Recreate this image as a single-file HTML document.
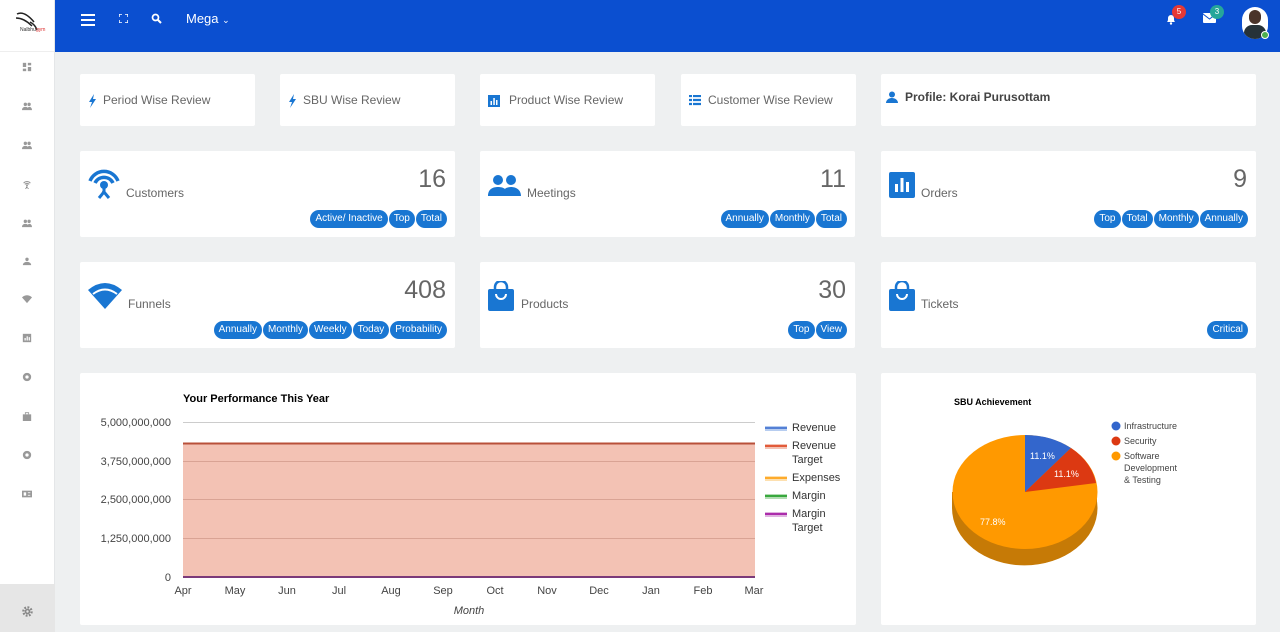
<!DOCTYPE html>
<html><head><meta charset="utf-8">
<style>
*{box-sizing:border-box;margin:0;padding:0}
body{width:1280px;height:632px;overflow:hidden;background:#eef0f1;font-family:"Liberation Sans",sans-serif;position:relative;color:#555}
.side{position:absolute;left:0;top:0;width:55px;height:632px;background:#fff;border-right:1px solid #e4e6e8}
.side .logo{height:52px;border-bottom:1px solid #eee}
.side .ic{position:absolute;left:22px;width:10px;height:10px}
.side .bot{position:absolute;left:0;bottom:0;width:55px;height:48px;background:#e6e6e6}
.top{position:absolute;left:55px;top:0;width:1225px;height:52px;background:#0b4fd0}
.card{position:absolute;background:#fff;border-radius:2px}
.rv{font-size:12px;color:#666;line-height:52px;padding-left:23px}
.rv svg{position:absolute;left:8px;top:20px}
.big{position:absolute;right:9px;top:14px;font-size:25px;color:#666}
.lbl{position:absolute;font-size:12px;color:#666}
.pills{position:absolute;right:8px;top:59px;display:flex;gap:1px}
.pill{background:#1976d2;color:#fff;font-size:10px;height:18px;line-height:18px;padding:0 5px;border-radius:9px}
.ic2{position:absolute}
</style></head><body>
<div class="side">
 <div class="logo">
  <svg width="55" height="52"><path d="M17 14c6-3 12 2 17 8M16 18c6 0 11 3 16 8M30 22c4 2 6 5 7 8" stroke="#222" stroke-width="1.5" fill="none"/><text x="20" y="31" font-size="5" fill="#333" font-family="Liberation Sans">Nalbhu</text><text x="36" y="31" font-size="5" fill="#d33" font-family="Liberation Sans">gym</text></svg>
 </div>
 <svg class="ic" style="top:62px" viewBox="0 0 12 12"><rect x="1" y="1" width="4" height="5" fill="#999"/><rect x="7" y="1" width="4" height="3" fill="#999"/><rect x="1" y="8" width="4" height="3" fill="#999"/><rect x="7" y="6" width="4" height="5" fill="#999"/></svg>
 <svg class="ic" style="top:101px" viewBox="0 0 12 12"><circle cx="4" cy="4" r="2" fill="#999"/><circle cx="8.5" cy="4" r="2" fill="#999"/><path d="M0 11c0-3 2-4 4-4s4 1 4 4zM6 11c0-3 2-4 3-4s3 1 3 4z" fill="#999"/></svg>
 <svg class="ic" style="top:140px" viewBox="0 0 12 12"><circle cx="4" cy="4" r="2" fill="#999"/><circle cx="8.5" cy="4" r="2" fill="#999"/><path d="M0 11c0-3 2-4 4-4s4 1 4 4zM6 11c0-3 2-4 3-4s3 1 3 4z" fill="#999"/></svg>
 <svg class="ic" style="top:179px" viewBox="0 0 12 12"><path d="M2 5a5 5 0 0 1 8 0M3.5 6.5a3 3 0 0 1 5 0" stroke="#999" fill="none" stroke-width="1.3"/><circle cx="6" cy="7.5" r="1.2" fill="#999"/><path d="M6 8v2l-2 2M6 10l2 2" stroke="#999" stroke-width="1"/></svg>
 <svg class="ic" style="top:218px" viewBox="0 0 12 12"><circle cx="4" cy="4" r="2" fill="#999"/><circle cx="8.5" cy="4" r="2" fill="#999"/><path d="M0 11c0-3 2-4 4-4s4 1 4 4zM6 11c0-3 2-4 3-4s3 1 3 4z" fill="#999"/></svg>
 <svg class="ic" style="top:256px" viewBox="0 0 12 12"><circle cx="6" cy="4" r="2" fill="#999"/><path d="M1 11c0-3 3-4 5-4s5 1 5 4z" fill="#999"/></svg>
 <svg class="ic" style="top:294px" viewBox="0 0 12 12"><path d="M0 4q6-5 12 0L6 11z" fill="#999"/></svg>
 <svg class="ic" style="top:333px" viewBox="0 0 12 12"><rect x="1" y="1" width="10" height="10" fill="#999"/><rect x="3" y="6" width="1.5" height="3" fill="#fff"/><rect x="5.5" y="4" width="1.5" height="5" fill="#fff"/><rect x="8" y="5" width="1.5" height="4" fill="#fff"/></svg>
 <svg class="ic" style="top:372px" viewBox="0 0 12 12"><circle cx="6" cy="6" r="5" fill="#999"/><circle cx="6" cy="6" r="2" fill="#fff"/></svg>
 <svg class="ic" style="top:411px" viewBox="0 0 12 12"><rect x="1" y="4" width="10" height="8" fill="#999"/><path d="M4 4V2h4v2" stroke="#999" fill="none"/></svg>
 <svg class="ic" style="top:450px" viewBox="0 0 12 12"><circle cx="6" cy="6" r="5" fill="#999"/><circle cx="6" cy="6" r="2" fill="#fff"/></svg>
 <svg class="ic" style="top:489px" viewBox="0 0 12 12"><rect x="0" y="2" width="12" height="8" fill="#999"/><rect x="2" y="4" width="3" height="4" fill="#fff"/><rect x="7" y="4" width="3" height="1" fill="#fff"/><rect x="7" y="7" width="3" height="1" fill="#fff"/></svg>
 <div class="bot"><svg style="position:absolute;left:22px;top:22px" width="11" height="11" viewBox="0 0 12 12"><circle cx="6" cy="6" r="4.5" fill="none" stroke="#888" stroke-width="2.5" stroke-dasharray="2 1.5"/><circle cx="6" cy="6" r="3" fill="#888"/><circle cx="6" cy="6" r="1.3" fill="#e6e6e6"/></svg></div>
</div>
<div class="top">
 <svg style="position:absolute;left:25px;top:13px" width="16" height="14"><path d="M1 2h14M1 7h14M1 12h14" stroke="#fff" stroke-width="2"/></svg>
 <svg style="position:absolute;left:64px;top:14px" width="9" height="9"><path d="M0 3V0h3M6 0h3v3M9 6v3H6M3 9H0V6" stroke="#fff" stroke-width="1.5" fill="none"/></svg>
 <svg style="position:absolute;left:96px;top:13px" width="11" height="11"><circle cx="4.5" cy="4.5" r="3" stroke="#fff" stroke-width="1.7" fill="none"/><path d="M7 7l3 3" stroke="#fff" stroke-width="2"/></svg>
 <div style="position:absolute;left:131px;top:11px;color:#fff;font-size:13px">Mega <span style="font-size:9px">&#8964;</span></div>
 <svg style="position:absolute;left:1110px;top:13px" width="12" height="12"><path d="M2 9c1-1 1-2 1-4a3 3 0 0 1 6 0c0 2 0 3 1 4z" fill="#fff"/><circle cx="6" cy="10.5" r="1.2" fill="#fff"/></svg>
 <div style="position:absolute;left:1117px;top:5px;width:14px;height:14px;border-radius:7px;background:#e53935;color:#fff;font-size:8px;text-align:center;line-height:14px">5</div>
 <svg style="position:absolute;left:1148px;top:13px" width="13" height="10"><rect x="0" y="0" width="13" height="10" rx="1" fill="#fff"/><path d="M0 1l6.5 5L13 1" stroke="#0b4fd0" fill="none"/></svg>
 <div style="position:absolute;left:1155px;top:5px;width:14px;height:14px;border-radius:7px;background:#26a69a;color:#fff;font-size:8px;text-align:center;line-height:14px">3</div>
 <div style="position:absolute;left:1187px;top:7px;width:26px;height:32px;border-radius:13px;background:#fff;overflow:hidden">
  <div style="position:absolute;left:7px;top:3px;width:12px;height:14px;border-radius:6px;background:#4a342a"></div>
  <div style="position:absolute;left:2px;top:18px;width:22px;height:16px;border-radius:8px 8px 0 0;background:#263238"></div>
 </div>
 <div style="position:absolute;left:1206px;top:31px;width:8px;height:8px;border-radius:4px;background:#4caf50;border:1.5px solid #fff"></div>
</div>

<div class="card rv" style="left:80px;top:74px;width:175px;height:52px"><svg width="8" height="14"><path d="M6 0L1 8h3l-2 6 6-9H5z" fill="#1976d2"/></svg>Period Wise Review</div>
<div class="card rv" style="left:280px;top:74px;width:175px;height:52px"><svg width="8" height="14"><path d="M6 0L1 8h3l-2 6 6-9H5z" fill="#1976d2"/></svg>SBU Wise Review</div>
<div class="card rv" style="left:480px;top:74px;width:175px;height:52px;padding-left:29px"><svg width="12" height="12" style="top:21px"><rect width="12" height="12" fill="#1976d2"/><rect x="2.5" y="6" width="1.5" height="4" fill="#fff"/><rect x="5.3" y="3" width="1.5" height="7" fill="#fff"/><rect x="8" y="5" width="1.5" height="5" fill="#fff"/></svg>Product Wise Review</div>
<div class="card rv" style="left:681px;top:74px;width:175px;height:52px;padding-left:27px"><svg width="12" height="11" style="top:21px"><path d="M0 1h3M4 1h8M0 5h3M4 5h8M0 9h3M4 9h8" stroke="#1976d2" stroke-width="2.3"/></svg>Customer Wise Review</div>
<div class="card" style="left:881px;top:74px;width:375px;height:52px"><svg style="position:absolute;left:5px;top:17px" width="12" height="12"><circle cx="6" cy="3.5" r="3" fill="#1976d2"/><path d="M0 12c0-3 3-5 6-5s6 2 6 5z" fill="#1976d2"/></svg><div style="position:absolute;left:24px;top:16px;font-size:12px;font-weight:bold;color:#444">Profile: Korai Purusottam</div></div>

<!-- row 2 -->
<div class="card" style="left:80px;top:151px;width:375px;height:86px">
 <svg class="ic2" style="left:7px;top:17px" width="34" height="32"><path d="M3 13a15 15 0 0 1 28 0M8 15a10 10 0 0 1 18 0" stroke="#1976d2" stroke-width="3.5" fill="none"/><circle cx="17" cy="17" r="4" fill="#1976d2"/><path d="M17 20v4l-5 6M17 24l5 6" stroke="#1976d2" stroke-width="3"/></svg>
 <div class="lbl" style="left:46px;top:35px">Customers</div><div class="big">16</div>
 <div class="pills"><span class="pill">Active/ Inactive</span><span class="pill">Top</span><span class="pill">Total</span></div>
</div>
<div class="card" style="left:480px;top:151px;width:375px;height:86px">
 <svg class="ic2" style="left:8px;top:23px" width="33" height="22"><circle cx="10" cy="6" r="5" fill="#1976d2"/><circle cx="23" cy="6" r="5" fill="#1976d2"/><path d="M0 22c0-7 5-9 10-9s10 2 10 9zM14 22c0-7 5-9 9-9s10 2 10 9z" fill="#1976d2"/></svg>
 <div class="lbl" style="left:47px;top:35px">Meetings</div><div class="big">11</div>
 <div class="pills"><span class="pill">Annually</span><span class="pill">Monthly</span><span class="pill">Total</span></div>
</div>
<div class="card" style="left:881px;top:151px;width:375px;height:86px">
 <svg class="ic2" style="left:8px;top:21px" width="26" height="26"><rect width="26" height="26" rx="2" fill="#1976d2"/><rect x="6" y="12" width="3" height="8" fill="#fff"/><rect x="11.5" y="6" width="3" height="14" fill="#fff"/><rect x="17" y="10" width="3" height="10" fill="#fff"/></svg>
 <div class="lbl" style="left:40px;top:35px">Orders</div><div class="big">9</div>
 <div class="pills"><span class="pill">Top</span><span class="pill">Total</span><span class="pill">Monthly</span><span class="pill">Annually</span></div>
</div>

<!-- row 3 -->
<div class="card" style="left:80px;top:262px;width:375px;height:86px">
 <svg class="ic2" style="left:8px;top:20px" width="34" height="27"><path d="M0 8q17-14 34 0L17 27z" fill="#1976d2"/><path d="M5 12q12-9 24 0" stroke="#fff" stroke-width="2" fill="none"/></svg>
 <div class="lbl" style="left:48px;top:35px">Funnels</div><div class="big">408</div>
 <div class="pills"><span class="pill">Annually</span><span class="pill">Monthly</span><span class="pill">Weekly</span><span class="pill">Today</span><span class="pill">Probability</span></div>
</div>
<div class="card" style="left:480px;top:262px;width:375px;height:86px">
 <svg class="ic2" style="left:8px;top:19px" width="26" height="30"><rect x="0" y="8" width="26" height="22" rx="2" fill="#1976d2"/><path d="M7 11V6a6 6 0 0 1 12 0v5" stroke="#1976d2" stroke-width="2.5" fill="none"/><path d="M8 13a5 5 0 0 0 10 0" stroke="#fff" stroke-width="2" fill="none"/></svg>
 <div class="lbl" style="left:41px;top:35px">Products</div><div class="big">30</div>
 <div class="pills"><span class="pill">Top</span><span class="pill">View</span></div>
</div>
<div class="card" style="left:881px;top:262px;width:375px;height:86px">
 <svg class="ic2" style="left:8px;top:19px" width="26" height="30"><rect x="0" y="8" width="26" height="22" rx="2" fill="#1976d2"/><path d="M7 11V6a6 6 0 0 1 12 0v5" stroke="#1976d2" stroke-width="2.5" fill="none"/><path d="M8 13a5 5 0 0 0 10 0" stroke="#fff" stroke-width="2" fill="none"/></svg>
 <div class="lbl" style="left:40px;top:35px">Tickets</div>
 <div class="pills"><span class="pill">Critical</span></div>
</div>

<!-- chart -->
<div class="card" style="left:80px;top:373px;width:776px;height:252px">
<svg width="776" height="252" font-family="Liberation Sans">
 <g transform="translate(-80,-373)">
 <text x="183" y="402" font-size="11" font-weight="bold" fill="#000">Your Performance This Year</text>
 <rect x="183" y="443" width="572" height="134" fill="#f3c2b4"/>
 <g stroke="#ccc" stroke-width="1"><line x1="183" y1="422.5" x2="755" y2="422.5"/></g>
 <g stroke="#d9a394" stroke-width="1"><line x1="183" y1="461.5" x2="755" y2="461.5"/><line x1="183" y1="499.5" x2="755" y2="499.5"/><line x1="183" y1="538.5" x2="755" y2="538.5"/></g>
 <line x1="183" y1="443.5" x2="755" y2="443.5" stroke="#b8503a" stroke-width="2"/>
 <line x1="183" y1="577" x2="755" y2="577" stroke="#7b3a7a" stroke-width="2"/>
 <g font-size="11" fill="#444" text-anchor="end"><text x="171" y="426">5,000,000,000</text><text x="171" y="465">3,750,000,000</text><text x="171" y="503">2,500,000,000</text><text x="171" y="542">1,250,000,000</text><text x="171" y="581">0</text></g>
 <g font-size="11" fill="#444" text-anchor="middle"><text x="183" y="594">Apr</text><text x="235" y="594">May</text><text x="287" y="594">Jun</text><text x="339" y="594">Jul</text><text x="391" y="594">Aug</text><text x="443" y="594">Sep</text><text x="495" y="594">Oct</text><text x="547" y="594">Nov</text><text x="599" y="594">Dec</text><text x="651" y="594">Jan</text><text x="703" y="594">Feb</text><text x="754" y="594">Mar</text></g>
 <text x="469" y="614" font-size="11" font-style="italic" fill="#444" text-anchor="middle">Month</text>
 <g font-size="11" fill="#333">
  <rect x="765" y="426" width="22" height="5" fill="#b7cdf0"/><line x1="765" y1="428" x2="787" y2="428" stroke="#3366cc" stroke-width="1.5"/><text x="792" y="431">Revenue</text>
  <rect x="765" y="444" width="22" height="5" fill="#f3c2b4"/><line x1="765" y1="446" x2="787" y2="446" stroke="#dc3912" stroke-width="1.5"/><text x="792" y="449">Revenue</text><text x="792" y="463">Target</text>
  <rect x="765" y="476" width="22" height="5" fill="#fde0b0"/><line x1="765" y1="478" x2="787" y2="478" stroke="#ff9900" stroke-width="1.5"/><text x="792" y="481">Expenses</text>
  <rect x="765" y="494" width="22" height="5" fill="#b3dcb3"/><line x1="765" y1="496" x2="787" y2="496" stroke="#109618" stroke-width="1.5"/><text x="792" y="499">Margin</text>
  <rect x="765" y="512" width="22" height="5" fill="#e0b3e0"/><line x1="765" y1="514" x2="787" y2="514" stroke="#990099" stroke-width="1.5"/><text x="792" y="517">Margin</text><text x="792" y="531">Target</text>
 </g>
 </g>
</svg>
</div>

<!-- pie -->
<div class="card" style="left:881px;top:373px;width:375px;height:252px">
<svg width="375" height="252" font-family="Liberation Sans">
 <g transform="translate(-881,-373)">
 <text x="954" y="405" font-size="9" font-weight="bold" fill="#000">SBU Achievement</text>
 <path d="M952 492v16a72 57 0 0 0 145 0v-16z" fill="#c67a06"/>
 <ellipse cx="1025" cy="508" rx="72.5" ry="57" fill="#c67a06"/>
 <ellipse cx="1025" cy="492" rx="72.5" ry="57" fill="#ff9900"/>
 <path d="M1025 492V435A72.5 57 0 0 1 1071 448z" fill="#3366cc"/>
 <path d="M1025 492L1071 448A72.5 57 0 0 1 1096 483z" fill="#dc3912"/>
 <g font-size="9" fill="#fff"><text x="1030" y="459">11.1%</text><text x="1054" y="477">11.1%</text><text x="980" y="525">77.8%</text></g>
 <g font-size="9" fill="#444">
  <circle cx="1116" cy="426" r="4.5" fill="#3366cc"/><text x="1124" y="429">Infrastructure</text>
  <circle cx="1116" cy="441" r="4.5" fill="#dc3912"/><text x="1124" y="444">Security</text>
  <circle cx="1116" cy="456" r="4.5" fill="#ff9900"/><text x="1124" y="459">Software</text><text x="1124" y="471">Development</text><text x="1124" y="483">&amp; Testing</text>
 </g>
 </g>
</svg>
</div>
</body></html>
